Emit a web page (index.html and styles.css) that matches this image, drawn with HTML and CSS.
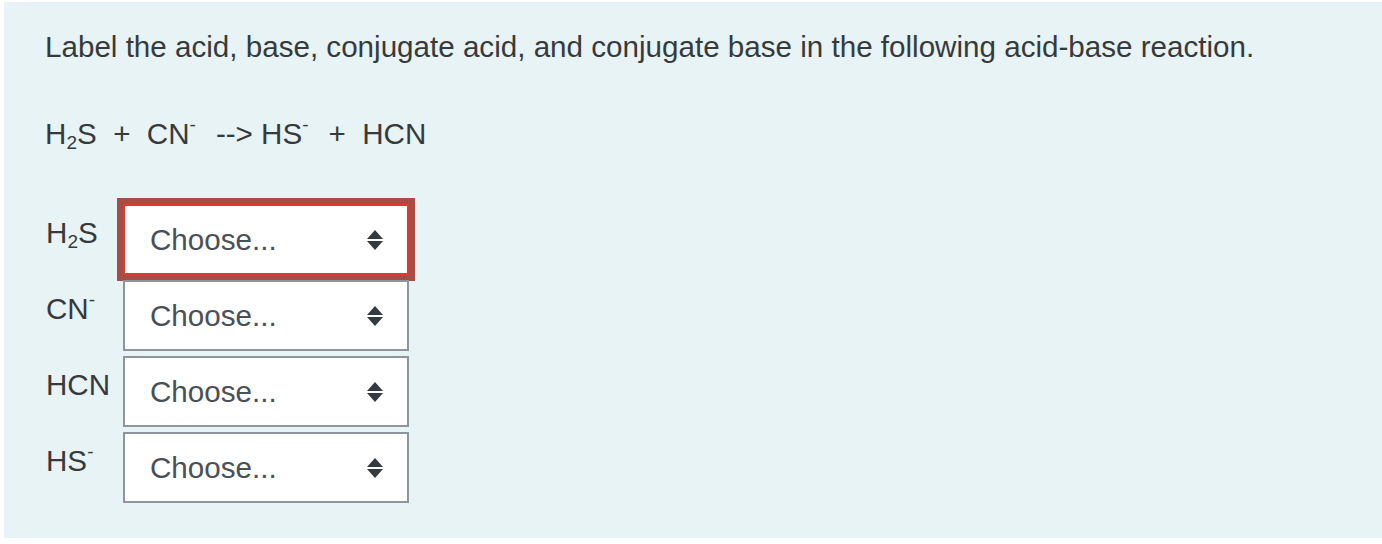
FILE: index.html
```html
<!DOCTYPE html>
<html>
<head>
<meta charset="utf-8">
<link rel="stylesheet" href="styles.css">
</head>
<body>
<div class="panel">
  <p class="question">Label the acid, base, conjugate acid, and conjugate base in the following acid-base reaction.</p>
  <p class="equation">H<sub>2</sub>S &nbsp;+ &nbsp;CN<sup>-</sup> &nbsp;--&gt; HS<sup>-</sup> &nbsp;+ &nbsp;HCN</p>
  <div class="rows">
    <div class="row">
      <div class="label">H<sub>2</sub>S</div>
      <div class="select focused"><span>Choose...</span><svg class="arrows" viewBox="0 0 16 20" width="16" height="20"><path d="M8 0 L16 9 H0 Z M0 11 H16 L8 20 Z" fill="#343a40"/></svg></div>
    </div>
    <div class="row">
      <div class="label">CN<sup>-</sup></div>
      <div class="select"><span>Choose...</span><svg class="arrows" viewBox="0 0 16 20" width="16" height="20"><path d="M8 0 L16 9 H0 Z M0 11 H16 L8 20 Z" fill="#343a40"/></svg></div>
    </div>
    <div class="row">
      <div class="label">HCN</div>
      <div class="select"><span>Choose...</span><svg class="arrows" viewBox="0 0 16 20" width="16" height="20"><path d="M8 0 L16 9 H0 Z M0 11 H16 L8 20 Z" fill="#343a40"/></svg></div>
    </div>
    <div class="row">
      <div class="label">HS<sup>-</sup></div>
      <div class="select"><span>Choose...</span><svg class="arrows" viewBox="0 0 16 20" width="16" height="20"><path d="M8 0 L16 9 H0 Z M0 11 H16 L8 20 Z" fill="#343a40"/></svg></div>
    </div>
  </div>
</div>
</body>
</html>
```
FILE: styles.css
```css
html, body {
  margin: 0;
  padding: 0;
  background: #ffffff;
}
body {
  font-family: "Liberation Sans", Arial, sans-serif;
  color: #373a3c;
}
.panel {
  margin: 2px 0 0 4px;
  height: 536px;
  box-sizing: border-box;
  background: #e7f3f5;
  padding: 25px 40px 0 41px;
}
.question {
  margin: 0;
  font-size: 29.6px;
  line-height: 40px;
}
.equation {
  margin: 47px 0 0 0;
  font-size: 29.6px;
  line-height: 40px;
}
sub {
  font-size: 19px;
  vertical-align: -5px;
  line-height: 0;
}
sup {
  font-size: 19px;
  vertical-align: 13px;
  line-height: 0;
}
.equation sup {
  margin-right: 3.5px;
}
.rows {
  margin-top: 50px;
  display: flex;
  flex-direction: column;
  gap: 5px;
}
.row {
  display: flex;
  align-items: flex-start;
}
.label {
  width: 78px;
  padding-left: 1px;
  box-sizing: border-box;
  font-size: 29.6px;
  line-height: 40px;
  margin-top: 9px;
}
.select {
  width: 286px;
  height: 71px;
  box-sizing: border-box;
  border: 2px solid #8f959e;
  background: #ffffff;
  display: flex;
  align-items: center;
  justify-content: space-between;
  padding: 1px 24px 0 25px;
  font-size: 29.6px;
  color: #495057;
}
.select.focused {
  border-color: #e2382d;
  box-shadow: 0 0 0 6px #a84c46;
}
.arrows {
  display: block;
}
```
